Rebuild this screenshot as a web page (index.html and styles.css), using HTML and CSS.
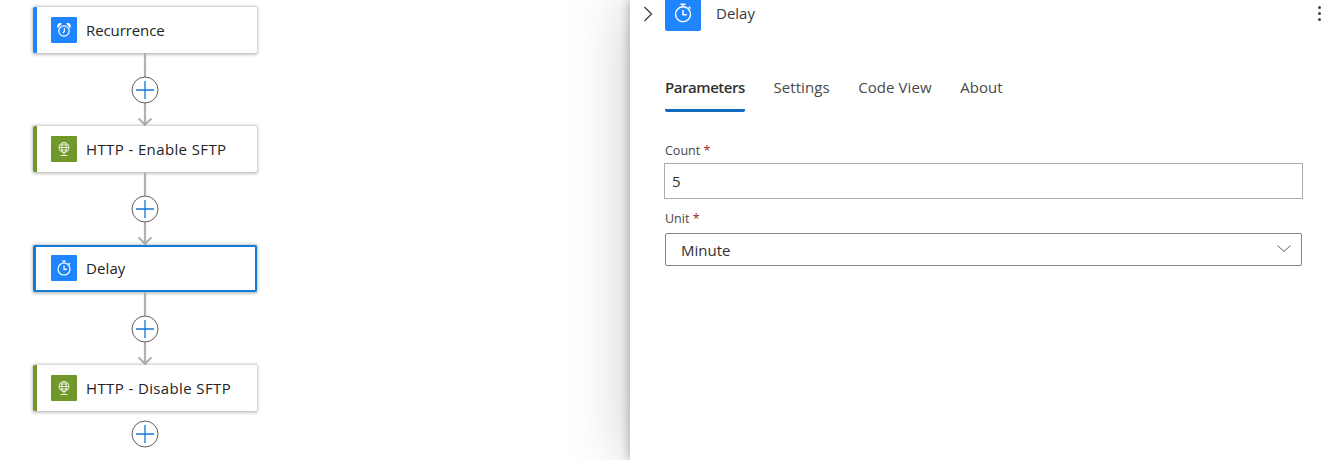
FILE: index.html
```html
<!DOCTYPE html>
<html lang="en">
<head>
<meta charset="utf-8">
<title>Delay</title>
<link rel="stylesheet" href="styles.css">
</head>
<body>
<svg class="defs" width="0" height="0" aria-hidden="true">
  <defs>
    <symbol id="connector" viewBox="0 0 28 73">
      <path class="wire" d="M14 0V71.500M7.500 65.500L14 71.500L20.500 65.500"/>
      <circle class="plus-ring" cx="14" cy="37" r="13"/>
      <path class="plus" d="M14 28V46M5 37H23"/>
    </symbol>
    <symbol id="alarm" viewBox="0 0 16 16">
      <g class="glyph">
        <circle cx="8" cy="9" r="5.200"/>
        <path d="M8.400 6V9.300L6.800 11M2 5.200C1.200 3 3 1 5 1.700ZM14 5.200C14.800 3 13 1 11 1.700Z"/>
      </g>
    </symbol>
    <symbol id="watch" viewBox="0 0 16 16">
      <g class="glyph">
        <circle cx="8" cy="9" r="6"/>
        <path d="M8 5.500V9.300H11M6 1H10M8 1V3M12.600 3L14 4.400"/>
      </g>
    </symbol>
    <symbol id="globe" viewBox="0 0 16 16">
      <g class="glyph thin">
        <circle cx="8" cy="6.500" r="5"/>
        <ellipse cx="8" cy="6.500" rx="2.200" ry="5"/>
        <path d="M3 6.500H13M3.800 4H12.200M3.800 9H12.200M8 11.500V14M4.500 14.500H11.500"/>
      </g>
    </symbol>
  </defs>
</svg>
<div class="page">
  <main class="canvas">
    <div class="card card-blue">
      <span class="badge badge-blue"><svg class="badge-icon"><use href="#alarm"/></svg></span>
      <span class="card-title title-tight">Recurrence</span>
    </div>
    <svg class="connector"><use href="#connector"/></svg>
    <div class="card card-green">
      <span class="badge badge-green"><svg class="badge-icon"><use href="#globe"/></svg></span>
      <span class="card-title title-wide">HTTP - Enable SFTP</span>
    </div>
    <svg class="connector"><use href="#connector"/></svg>
    <div class="card card-blue card-selected">
      <span class="badge badge-blue"><svg class="badge-icon"><use href="#watch"/></svg></span>
      <span class="card-title">Delay</span>
    </div>
    <svg class="connector"><use href="#connector"/></svg>
    <div class="card card-green">
      <span class="badge badge-green"><svg class="badge-icon"><use href="#globe"/></svg></span>
      <span class="card-title title-wide">HTTP - Disable SFTP</span>
    </div>
    <svg class="add-end" viewBox="0 0 28 28">
      <circle class="plus-ring" cx="14" cy="14" r="13"/>
      <path class="plus" d="M14 5V23M5 14H23"/>
    </svg>
  </main>
  <aside class="panel">
    <header class="panel-header">
      <svg class="collapse" viewBox="0 0 10 16"><path d="M1.500 1L8.500 8L1.500 15"/></svg>
      <span class="panel-badge"><svg class="panel-icon"><use href="#watch"/></svg></span>
      <span class="panel-title">Delay</span>
      <span class="more"><i></i><i></i><i></i></span>
    </header>
    <nav class="tabs">
      <span class="tab tab-active">Parameters</span>
      <span class="tab">Settings</span>
      <span class="tab">Code View</span>
      <span class="tab">About</span>
    </nav>
    <form class="form">
      <div class="label">Count <b>*</b></div>
      <div class="input">5</div>
      <div class="label label-unit">Unit <b>*</b></div>
      <div class="select">
        <span>Minute</span>
        <svg class="select-chevron" viewBox="0 0 14 7"><path d="M0.500 0.500L7 6.500L13.500 0.500"/></svg>
      </div>
    </form>
  </aside>
</div>
</body>
</html>
```

FILE: styles.css
```css
* { box-sizing: border-box; }
html, body { margin: 0; height: 100%; }
body {
  background: #fff;
  font-family: "Open Sans", "Noto Sans", sans-serif;
  color: #242424;
  overflow: hidden;
}
.defs { display: block; height: 0; }
.page { display: flex; width: 1321px; height: 460px; overflow: hidden; }

.canvas {
  width: 630px;
  flex: none;
  padding: 7px 0 0 33px;
  display: flex;
  flex-direction: column;
  align-items: flex-start;
}
.card {
  width: 224px;
  height: 46.200px;
  flex: none;
  display: flex;
  align-items: center;
  gap: 9px;
  background: #fff;
  border-radius: 2px;
  box-shadow: 0 0.500px 3px 1px rgba(0, 0, 0, 0.24);
}
.card-blue { border-left: 4px solid #1f85ff; padding-left: 14px; }
.card-green { border-left: 4px solid #71982a; padding-left: 14px; }
.card-selected {
  border: 2px solid #0f7cd8;
  border-left: 3px solid #0f7cd8;
  padding-left: 15px;
}
.badge {
  width: 26px;
  height: 26px;
  flex: none;
  display: flex;
  align-items: center;
  justify-content: center;
  border-radius: 1px;
}
.badge-blue { background: #1f85ff; }
.badge-green { background: #71982a; }
.badge-icon { width: 16px; height: 16px; }
.card-title { font-size: 15px; font-weight: 500; letter-spacing: 0.1px; color: #242424; white-space: nowrap; }
.title-tight { letter-spacing: -0.1px; }
.title-wide { letter-spacing: 0.38px; }

.connector { display: block; width: 28px; height: 73px; flex: none; margin-left: 98px; }
.add-end { display: block; width: 28px; height: 28px; flex: none; margin: 9.500px 0 0 98px; }
.wire { fill: none; stroke: #b1b1b1; stroke-width: 2.200; }
.plus-ring { fill: #fff; stroke: #605e5c; stroke-width: 1; }
.plus { fill: none; stroke: #0f78d4; stroke-width: 1.300; }
.glyph { fill: none; stroke: #fff; stroke-width: 1.200; }
.glyph.thin { stroke-width: 0.800; }

.panel {
  flex: 1;
  background: #fff;
  box-shadow: 0 0 60px 0 rgba(0, 0, 0, 0.22), -2px 0 8px 0 rgba(0, 0, 0, 0.22);
  position: relative;
  min-width: 0;
}
.panel-header {
  height: 31px;
  display: flex;
  align-items: center;
  padding-left: 13px;
}
.collapse { width: 10px; height: 16px; margin-top: -4px; flex: none; }
.collapse path { fill: none; stroke: #3f3f3f; stroke-width: 1.300; }
.panel-badge {
  width: 36px;
  height: 36px;
  flex: none;
  margin: -5px 0 0 12px;
  display: flex;
  align-items: center;
  justify-content: center;
  background: #1f85ff;
  border-radius: 2px;
}
.panel-icon { width: 20px; height: 20px; }
.panel-title { margin: -5px 0 0 15px; font-size: 15px; font-weight: 500; color: #3b3a39; letter-spacing: 0; }
.more {
  margin-left: auto;
  margin-top: -5px;
  width: 4px;
  margin-right: -1px;
  display: flex;
  flex-direction: column;
  gap: 3px;
}
.more i { display: block; width: 3px; height: 3px; background: #424242; border-radius: 50%; }

.tabs {
  display: flex;
  gap: 28.500px;
  margin: 33px 0 0 35px;
}
.tab {
  height: 48px;
  padding-top: 12px;
  font-size: 15px;
  line-height: 22px;
  color: #4a4a4a;
  letter-spacing: 0.08px;
  white-space: nowrap;
}
.tab-active {
  font-weight: 600;
  letter-spacing: -0.45px;
  color: #323130;
  border-bottom: 3px solid #0f6cbd;
  border-radius: 0 0 2px 2px;
}

.form { margin: 33px 18px 0 34px; display: flex; flex-direction: column; }
.label { font-size: 12.500px; line-height: 12px; color: #484644; padding-left: 1px; height: 18px; }
.label b { font-weight: 400; color: #a4262c; }
.label-unit { margin-top: 14px; height: 23px; }
.input {
  height: 36px;
  border: 1px solid #ababab;
  padding-left: 7px;
  font-size: 15px;
  line-height: 34px;
  color: #323130;
}
.select {
  height: 33px;
  margin: -3px 1px 0 1px;
  display: flex;
  align-items: center;
  justify-content: space-between;
  border: 1px solid #858585;
  border-radius: 2px;
  padding: 0 10px 0 15px;
  font-size: 15px;
  color: #323130;
}
.select-chevron { width: 14px; height: 7px; margin-top: -2px; }
.select-chevron path { fill: none; stroke: #605e5c; stroke-width: 1; }
```
